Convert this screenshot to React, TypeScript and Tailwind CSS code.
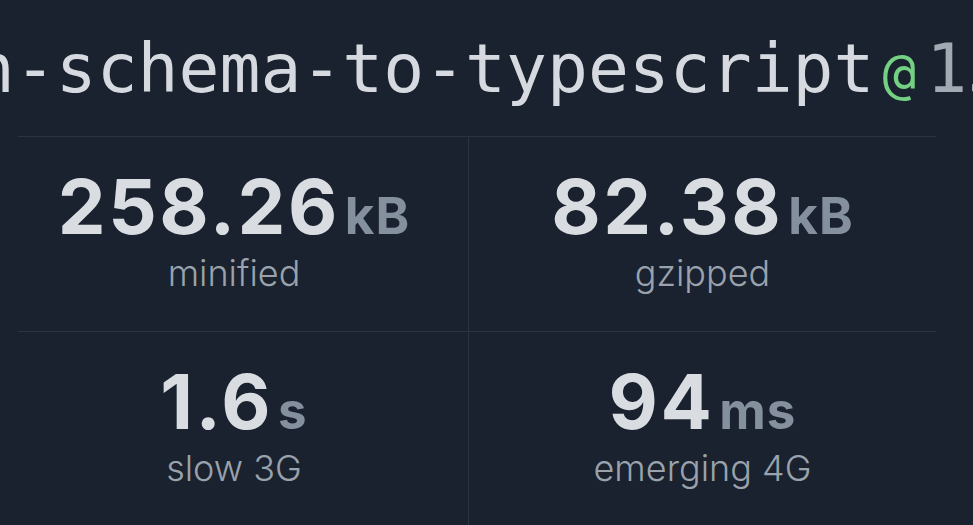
const stats = [
  [
    { value: "258.26", unit: "kB", label: "minified" },
    { value: "82.38", unit: "kB", label: "gzipped" },
  ],
  [
    { value: "1.6", unit: "s", label: "slow 3G" },
    { value: "94", unit: "ms", label: "emerging 4G" },
  ],
];

function Stat({ value, unit, label }: { value: string; unit: string; label: string }) {
  return (
    <div className="flex flex-col items-center pt-[31px]">
      <div className="flex items-baseline leading-none">
        <span className="text-[76px] font-bold tracking-[2.5px] text-[#d9dce1]">{value}</span>
        <span className="ml-[5px] text-[51px] font-bold tracking-[1px] text-[#85909f]">{unit}</span>
      </div>
      <div className="mt-[11px] text-[36px] font-light leading-none text-[#9aa2ad]">{label}</div>
    </div>
  );
}

export default function App() {
  return (
    <div className="h-[525px] w-full overflow-hidden bg-[#19222e] font-['Inter',sans-serif]">
      {/* package name, wider than the window */}
      <div className="ml-[-149px] flex items-baseline whitespace-nowrap pb-[33px] pt-[35px] font-['DejaVu_Sans_Mono',monospace] text-[68px] leading-none">
        <span className="text-[#d6dae0]">json-schema-to-typescript</span>
        <span className="ml-[8px] text-[56px] text-[#74d183]">@</span>
        <span className="ml-[10px] text-[#a2a9b3]">15.0.4</span>
      </div>

      {stats.map((row, i) => (
        <div key={i}>
          <div className="ml-[18px] h-px w-[918px] bg-[#2a3441]" />
          <div className="grid h-[194px] grid-cols-[468px_468px]">
            <Stat {...row[0]} />
            <div className="border-l border-[#2a3441]">
              <Stat {...row[1]} />
            </div>
          </div>
        </div>
      ))}
    </div>
  );
}
